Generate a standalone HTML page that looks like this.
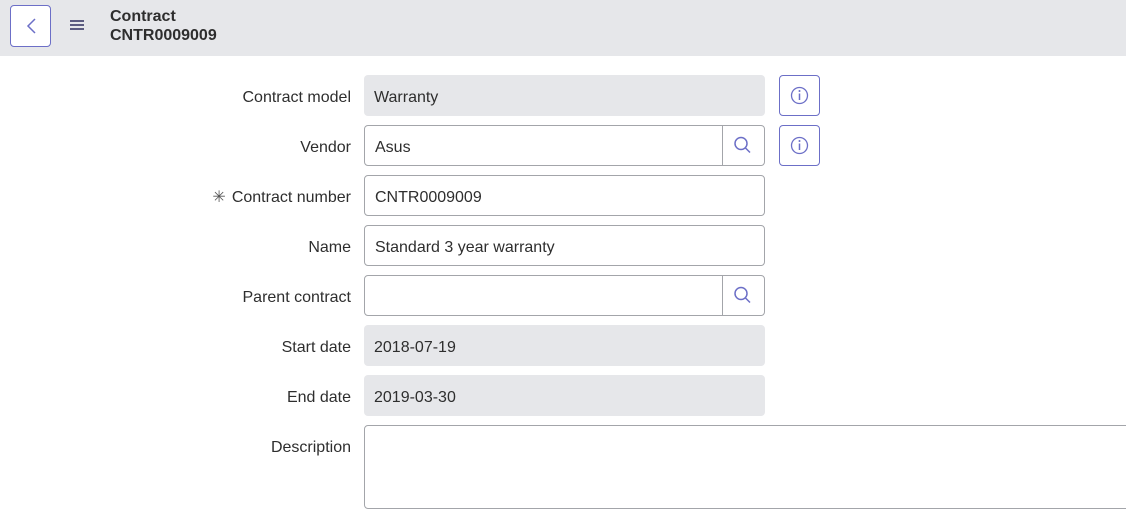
<!DOCTYPE html>
<html><head><style>
body{margin:0;width:1126px;height:518px;background:#fff;font-family:"Liberation Sans",sans-serif;position:relative;overflow:hidden;color:#2e2e2e}
.hdr{position:absolute;left:0;top:0;width:1126px;height:56px;background:#e6e7ea}
.back{position:absolute;left:10px;top:5px;width:41px;height:42px;border:1px solid #6c6fc7;border-radius:4px;background:#fff;box-sizing:border-box}
.t{position:absolute;left:110px;font-size:16px;font-weight:bold;color:#2e2e2e}
.lbl{position:absolute;right:775px;font-size:16px;line-height:20px;color:#2e2e2e;white-space:nowrap}
.f{position:absolute;left:364px;width:401px;height:41px;box-sizing:border-box;border-radius:4px;font-size:16px;padding:2px 10px 0;line-height:41px}
.ro{background:#e6e7ea}
.ed{border:1px solid #a3a5aa;background:#fff;line-height:39px}
.srch{position:absolute;right:0;top:0;width:41px;height:39px;border-left:1px solid #a3a5aa}
.info{position:absolute;left:779px;width:41px;height:41px;border:1px solid #6c6fc7;border-radius:4px;box-sizing:border-box}
</style></head><body>
<div class="hdr">
<div class="back"><svg width="39" height="40"><path d="M24 13 L17 20 L24 27" fill="none" stroke="#6c6fc7" stroke-width="1.5"/></svg></div>
<svg style="position:absolute;left:69px;top:18px" width="16" height="14"><path d="M1 3H15M1 7H15M1 11H15" stroke="#2e2e5e" stroke-width="1.5"/></svg>
<div class="t" style="top:8px">Contract</div>
<div class="t" style="top:27px">CNTR0009009</div>
</div>

<div class="lbl" style="top:88px">Contract model</div>
<div class="f ro" style="top:75px">Warranty</div>
<div class="info" style="top:75px"><svg width="39" height="39"><circle cx="19.5" cy="19.5" r="8" fill="none" stroke="#6c6fc7" stroke-width="1.3"/><path d="M19.5 17.5V24" stroke="#6c6fc7" stroke-width="1.5"/><circle cx="19.5" cy="15" r="1" fill="#6c6fc7"/></svg></div>

<div class="lbl" style="top:138px">Vendor</div>
<div class="f ed" style="top:125px">Asus<div class="srch"><svg width="40" height="39"><circle cx="18" cy="17.5" r="6" fill="none" stroke="#6c6fc7" stroke-width="1.5"/><path d="M22.5 22L27 26.5" stroke="#6c6fc7" stroke-width="1.5"/></svg></div></div>
<div class="info" style="top:125px"><svg width="39" height="39"><circle cx="19.5" cy="19.5" r="8" fill="none" stroke="#6c6fc7" stroke-width="1.3"/><path d="M19.5 17.5V24" stroke="#6c6fc7" stroke-width="1.5"/><circle cx="19.5" cy="15" r="1" fill="#6c6fc7"/></svg></div>

<div class="lbl" style="top:188px"><span style="color:#555;margin-right:6px">✳︎</span>Contract number</div>
<div class="f ed" style="top:175px">CNTR0009009</div>

<div class="lbl" style="top:238px">Name</div>
<div class="f ed" style="top:225px">Standard 3 year warranty</div>

<div class="lbl" style="top:288px">Parent contract</div>
<div class="f ed" style="top:275px"><div class="srch"><svg width="40" height="39"><circle cx="18" cy="17.5" r="6" fill="none" stroke="#6c6fc7" stroke-width="1.5"/><path d="M22.5 22L27 26.5" stroke="#6c6fc7" stroke-width="1.5"/></svg></div></div>

<div class="lbl" style="top:338px">Start date</div>
<div class="f ro" style="top:325px">2018-07-19</div>

<div class="lbl" style="top:388px">End date</div>
<div class="f ro" style="top:375px">2019-03-30</div>

<div class="lbl" style="top:438px">Description</div>
<div class="f ed" style="top:425px;width:780px;height:84px"></div>
</body></html>
